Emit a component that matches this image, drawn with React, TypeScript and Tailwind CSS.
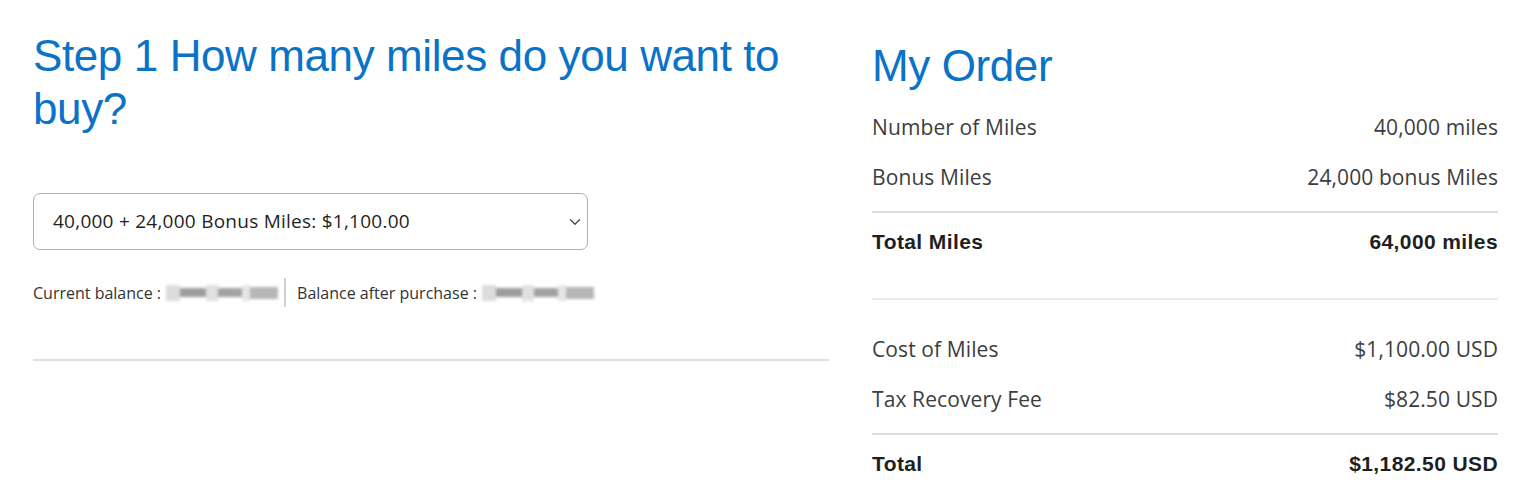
import React from 'react';
import { ChevronDown } from 'lucide-react';

const Blur: React.FC<{ className?: string }> = ({ className }) => (
  <span className={`inline-flex h-[20px] w-[112px] items-center blur-[1.5px] ${className ?? ''}`}>
    <span className="h-[16px] w-[14px] bg-[#dcdcdc]" />
    <span className="h-[9px] w-[26px] bg-[#9c9c9c]" />
    <span className="h-[16px] w-[12px] bg-[#e0e0e0]" />
    <span className="h-[9px] w-[24px] bg-[#a2a2a2]" />
    <span className="h-[16px] w-[8px] bg-[#e6e6e6]" />
    <span className="h-[12px] w-[28px] bg-[#b6b6b6]" />
  </span>
);

const Row: React.FC<{ label: string; value: string; bold?: boolean; className?: string }> = ({ label, value, bold, className }) => (
  <div
    className={`flex h-[50px] items-center justify-between ${
      bold
        ? "font-['Liberation_Sans',Arial,sans-serif] text-[21px] font-bold tracking-[0.4px] text-[#1f1f1f]"
        : "font-['Open_Sans',Arial,sans-serif] text-[21px] tracking-[0.1px] text-[#3d3d3d]"
    } ${className ?? ''}`}
  >
    <span>{label}</span>
    <span>{value}</span>
  </div>
);

export default function App() {
  return (
    <div className="flex min-h-[502px] w-[1536px] bg-white pl-[33px] pr-[38px] pt-[29px] font-['Liberation_Sans',Arial,sans-serif]">
      {/* Step 1 */}
      <div className="w-[796px]">
        <h1 className="text-[44px] leading-[53px] tracking-[-0.4px] text-[#0a72c7]">
          Step 1 How many miles do you want to buy?
        </h1>
        <div className="mt-[58px] flex h-[57px] w-[555px] items-center justify-between rounded-[7px] border border-[#a9b1b8] pl-[19px] pr-[3px] font-['Open_Sans',Arial,sans-serif] text-[19px] font-medium tracking-[0.25px] text-[#1f1f1f]">
          <span>40,000 + 24,000 Bonus Miles: $1,100.00</span>
          <ChevronDown size={18} strokeWidth={1.6} className="text-[#444]" />
        </div>
        <div className="mt-[28px] flex items-center font-['Open_Sans',Arial,sans-serif] text-[16px] text-[#333]">
          <span>Current balance :</span>
          <Blur className="ml-[5px]" />
          <span className="ml-[6px] mr-[11px] h-[29px] w-[2px] bg-[#cfcfcf]" />
          <span>Balance after purchase :</span>
          <Blur className="ml-[5px]" />
        </div>
        <div className="mt-[52px] h-[2px] bg-[#e0e0e0]" />
      </div>

      {/* My Order */}
      <div className="ml-[43px] flex-1">
        <h2 className="pt-[10px] text-[44px] leading-[53px] tracking-[-0.4px] text-[#0a72c7]">My Order</h2>
        <div className="mt-[11px]">
          <Row label="Number of Miles" value="40,000 miles" />
          <Row label="Bonus Miles" value="24,000 bonus Miles" />
          <div className="mt-[8px] h-[2px] bg-[#dedede]" />
          <Row label="Total Miles" value="64,000 miles" bold className="mt-[4px]" />
          <div className="mt-[31px] h-[2px] bg-[#ececec]" />
          <Row label="Cost of Miles" value="$1,100.00 USD" className="mt-[25px]" />
          <Row label="Tax Recovery Fee" value="$82.50 USD" />
          <div className="mt-[8px] h-[2px] bg-[#dedede]" />
          <Row label="Total" value="$1,182.50 USD" bold className="mt-[4px]" />
        </div>
      </div>
    </div>
  );
}
